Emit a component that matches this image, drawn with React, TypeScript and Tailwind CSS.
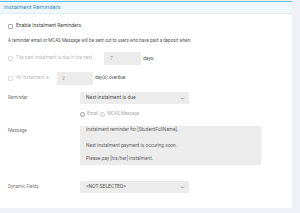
import { ChevronDown } from 'lucide-react';

function Select({ value }: { value: string }) {
  return (
    <div className="flex h-[12px] w-[109px] items-center justify-between rounded-[1px] bg-[#ececec] pl-[6px] pr-[4px] text-[5px] text-[#555]">
      <span>{value}</span>
      <ChevronDown className="h-[5px] w-[5px] text-[#666]" strokeWidth={3} />
    </div>
  );
}

function Checkbox({ disabled }: { disabled?: boolean }) {
  return (
    <span
      className={`inline-block h-[5px] w-[5px] shrink-0 rounded-[1px] border-[0.6px] ${
        disabled ? 'border-[#ddd]' : 'border-[#aaa]'
      } bg-white`}
    />
  );
}

export default function App() {
  return (
    <div className="h-[213px] w-[300px] bg-[#f0f1f6] pt-[1px]" style={{ fontFamily: 'Roboto, "Liberation Sans", sans-serif' }}>
      <div className="h-[207px] w-[292px] border-t-[1.5px] border-[#5bc0eb] bg-white">
        {/* Header */}
        <div className="flex h-[12px] items-center border-b-[0.6px] border-[#dfeaf1] bg-[#eef7fc] pl-[4px] text-[5.8px] text-[#3a8fc8]">
          Instalment Reminders
        </div>

        <div className="pl-[8px] text-[5px] text-[#555]">
          {/* Enable */}
          <div className="mt-[8px] flex h-[8px] items-center gap-[3px]">
            <Checkbox />
            <span className="text-[#444]">Enable Instalment Reminders</span>
          </div>

          <div className="mt-[8px] flex h-[6px] items-center text-[4.5px] text-[#555]">
            A reminder email or MCAS Message will be sent out to users who have paid a deposit when:
          </div>

          {/* Next instalment */}
          <div className="mt-[8px] flex h-[13px] items-center">
            <div className="flex w-[96px] items-center gap-[3px] text-[4.6px] text-[#bbb]">
              <Checkbox disabled />
              <span>The next instalment is due in the next</span>
            </div>
            <div className="flex h-[13px] w-[37px] items-center bg-[#ececec] pl-[6px] text-[#999]">7</div>
            <span className="ml-[2px] text-[#555]">days.</span>
          </div>

          {/* Overdue */}
          <div className="mt-[7px] flex h-[13px] items-center">
            <div className="flex w-[49px] items-center gap-[3px] text-[4.6px] text-[#bbb]">
              <Checkbox disabled />
              <span>An instalment is</span>
            </div>
            <div className="flex h-[13px] w-[36px] items-center bg-[#ececec] pl-[5px] text-[#999]">2</div>
            <span className="ml-[2px] text-[4.6px] text-[#555]">day(s) overdue.</span>
          </div>

          {/* Reminder */}
          <div className="mt-[7px] flex items-center">
            <span className="w-[72px] text-[4.6px] text-[#777]">Reminder</span>
            <Select value="Next instalment is due" />
          </div>

          {/* Radios */}
          <div className="mt-[7px] flex h-[6px] items-center pl-[72px] text-[4.5px] text-[#aaa]">
            <span className="mr-[2px] inline-block h-[5px] w-[5px] rounded-full border-[1.5px] border-[#999] bg-white" />
            <span className="mr-[2px]">Email</span>
            <span className="mr-[2px] inline-block h-[5px] w-[5px] rounded-full border-[0.6px] border-[#ccc] bg-white" />
            <span>MCAS Message</span>
          </div>

          {/* Message */}
          <div className="mt-[9px] flex items-start">
            <span className="mt-[2px] w-[72px] text-[4.6px] text-[#777]">Message</span>
            <div className="h-[39px] w-[181px] bg-[#ececec] pl-[6px] pt-[1px] text-[4.8px] text-[#666]">
              <div className="leading-[6px]">Instalment reminder for [StudentFullName],</div>
              <div className="mt-[10px] leading-[6px]">Next instalment payment is occuring soon.</div>
              <div className="mt-[7px] leading-[6px]">Please pay [his/her] instalment.</div>
            </div>
          </div>

          {/* Dynamic fields */}
          <div className="mt-[16px] flex items-center">
            <span className="w-[72px] text-[4.5px] text-[#777]">Dynamic Fields:</span>
            <Select value="<NOT SELECTED>" />
          </div>
        </div>
      </div>
    </div>
  );
}
